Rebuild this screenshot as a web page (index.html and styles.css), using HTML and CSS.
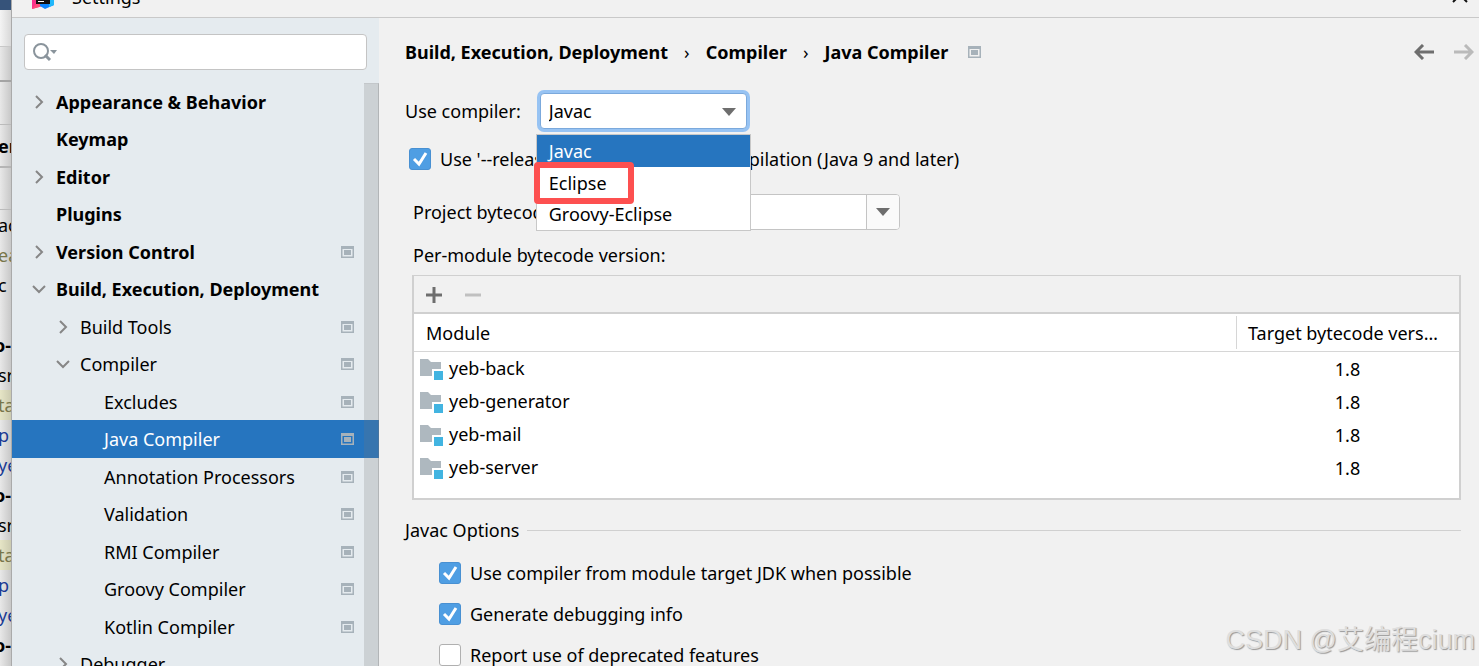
FILE: index.html
```html
<!DOCTYPE html>
<html lang="en">
<head>
    <meta charset="utf-8">
    <title>Settings</title>
    <link rel="stylesheet" href="styles.css">
</head>
<body>

    <!-- shared icons -->
    <svg class="defs" aria-hidden="true">
        <symbol id="right" viewBox="0 0 14 14"><path d="M4 1l6 6-6 6" fill="none" stroke="#868686" stroke-width="2"/></symbol>
        <symbol id="down" viewBox="0 0 14 14"><path d="M1 4l6 6 6-6" fill="none" stroke="#868686" stroke-width="2"/></symbol>
        <symbol id="project" viewBox="0 0 13 12"><path d="M0 0h13v12H0zM1.500 3v7.500h10V3z" fill="#a7b2ba" fill-rule="evenodd"/><path d="M3 4h7v5H3z" fill="#a7b2ba"/></symbol>
        <symbol id="module" viewBox="0 0 24 22"><path d="M0 0h8l3 3h10v7h-9v7H0z" fill="#aeb8bf"/><path d="M14 12h9v9h-9z" fill="#42b4e1"/></symbol>
    </svg>

    <div class="screen">
        <div class="editor" aria-hidden="true">
            <div class="editor-title"></div>
            <div class="editor-menu"></div>
            <div class="editor-bar"></div>
            <div class="editor-tabs"></div>
            <div class="editor-file">er</div>
            <div class="editor-gap"></div>
            <div class="line">ac</div>
            <div class="line note">ea</div>
            <div class="line">c</div>
            <div class="line"></div>
            <div class="line bold">o-</div>
            <div class="line">sr</div>
            <div class="line note marked">ta</div>
            <div class="line blue">p</div>
            <div class="line blue">ye</div>
            <div class="line bold">o-</div>
            <div class="line">sr</div>
            <div class="line note marked">ta</div>
            <div class="line blue">p</div>
            <div class="line blue">ye</div>
            <div class="line bold">o-</div>
        </div>

        <div class="dialog">
            <div class="titlebar">
                <svg class="logo" width="22" height="24" viewBox="0 0 22 24">
                    <path d="M0 0h11v21L0 24z" fill="#fc318c"/>
                    <path d="M0 24l5-7 5 3-3 2z" fill="#ff4b7b"/>
                    <path d="M9 0h13v20l-9 4-5-3z" fill="#0a84ff"/>
                    <path d="M17 10l5-2v12l-5 2z" fill="#21b8fb"/>
                    <path d="M4 3h14v16H4z" fill="#111"/>
                    <path d="M6 16h6v1H6z" fill="#fff"/>
                </svg>
                <span>Settings</span>
                <button class="close" aria-label="Close"><svg width="16" height="16" viewBox="0 0 16 16"><path d="M1 1l14 14M15 1L1 15" stroke="#111" stroke-width="2"/></svg></button>
            </div>

            <div class="content">
                <nav class="sidebar">
                    <div class="search">
                        <svg width="26" height="20" viewBox="0 0 26 20">
                            <circle cx="9" cy="9" r="7" fill="none" stroke="#8a949c" stroke-width="2"/>
                            <path d="M13 13l5 5" stroke="#8a949c" stroke-width="3"/>
                            <path d="M18 8h7l-3 4z" fill="#8a949c"/>
                        </svg>
                        <input type="text" aria-label="Search settings">
                    </div>
                    <div class="tree-box">
                        <ul class="tree">
                            <li><a href="#" class="top"><svg class="arrow"><use href="#right"/></svg>Appearance &amp; Behavior</a></li>
                            <li><a href="#" class="top"><span class="arrow"></span>Keymap</a></li>
                            <li><a href="#" class="top"><svg class="arrow"><use href="#right"/></svg>Editor</a></li>
                            <li><a href="#" class="top"><span class="arrow"></span>Plugins</a></li>
                            <li><a href="#" class="top"><svg class="arrow"><use href="#right"/></svg>Version Control<svg class="mark"><use href="#project"/></svg></a></li>
                            <li><a href="#" class="top"><svg class="arrow"><use href="#down"/></svg>Build, Execution, Deployment</a></li>
                            <li><a href="#" class="second"><svg class="arrow"><use href="#right"/></svg>Build Tools<svg class="mark"><use href="#project"/></svg></a></li>
                            <li><a href="#" class="second"><svg class="arrow"><use href="#down"/></svg>Compiler<svg class="mark"><use href="#project"/></svg></a></li>
                            <li><a href="#" class="third">Excludes<svg class="mark"><use href="#project"/></svg></a></li>
                            <li><a href="#" class="third selected">Java Compiler<svg class="mark"><use href="#project"/></svg></a></li>
                            <li><a href="#" class="third">Annotation Processors<svg class="mark"><use href="#project"/></svg></a></li>
                            <li><a href="#" class="third">Validation<svg class="mark"><use href="#project"/></svg></a></li>
                            <li><a href="#" class="third">RMI Compiler<svg class="mark"><use href="#project"/></svg></a></li>
                            <li><a href="#" class="third">Groovy Compiler<svg class="mark"><use href="#project"/></svg></a></li>
                            <li><a href="#" class="third">Kotlin Compiler<svg class="mark"><use href="#project"/></svg></a></li>
                            <li><a href="#" class="second"><svg class="arrow"><use href="#right"/></svg>Debugger</a></li>
                        </ul>
                        <div class="scrollbar"></div>
                    </div>
                </nav>

                <main class="page">
                    <header class="crumbs">
                        <h1>Build, Execution, Deployment</h1>
                        <span>›</span>
                        <h1>Compiler</h1>
                        <span>›</span>
                        <h1>Java Compiler</h1>
                        <svg class="mark"><use href="#project"/></svg>
                        <div class="history">
                            <button aria-label="Back"><svg width="20" height="16" viewBox="0 0 20 16"><path d="M20 8H2M9 1L2 8l7 7" fill="none" stroke="#6e6e6e" stroke-width="3"/></svg></button>
                            <button aria-label="Forward" disabled><svg width="20" height="16" viewBox="0 0 20 16"><path d="M0 8h18M11 1l7 7-7 7" fill="none" stroke="#bababa" stroke-width="3"/></svg></button>
                        </div>
                    </header>

                    <div class="row compiler">
                        <label for="compiler">Use compiler:</label>
                        <div class="combo">
                            <select id="compiler">
                                <option>Javac</option>
                                <option>Eclipse</option>
                                <option>Groovy-Eclipse</option>
                            </select>
                            <svg class="triangle" width="14" height="8" viewBox="0 0 14 8"><path d="M0 0h14L7 8z" fill="#6e6e6e"/></svg>
                            <ul class="popup">
                                <li class="active">Javac</li>
                                <li class="boxed">Eclipse</li>
                                <li>Groovy-Eclipse</li>
                            </ul>
                        </div>
                    </div>

                    <div class="row release">
                        <input type="checkbox" id="release" checked>
                        <label for="release" class="release-text"><span>Use '--release' option for cross-com</span><span>pilation (Java 9 and later)</span></label>
                    </div>

                    <div class="row project">
                        <label for="version">Project bytecode version:</label>
                        <div class="editable">
                            <input type="text" id="version">
                            <button aria-label="Show versions"><svg width="14" height="8" viewBox="0 0 14 8"><path d="M0 0h14L7 8z" fill="#6e6e6e"/></svg></button>
                        </div>
                    </div>

                    <div class="caption" id="modules">Per-module bytecode version:</div>

                    <div class="panel">
                        <div class="toolbar">
                            <button aria-label="Add"><svg width="16" height="16" viewBox="0 0 16 16"><path d="M8 0v16M0 8h16" stroke="#6e6e6e" stroke-width="3"/></svg></button>
                            <button aria-label="Remove" disabled><svg width="16" height="16" viewBox="0 0 16 16"><path d="M0 8h16" stroke="#c0c0c0" stroke-width="3"/></svg></button>
                        </div>
                        <table aria-labelledby="modules">
                            <thead>
                                <tr><th>Module</th><th class="target"><div>Target bytecode version</div></th></tr>
                            </thead>
                            <tbody>
                                <tr><td><svg class="module"><use href="#module"/></svg>yeb-back</td><td>1.8</td></tr>
                                <tr><td><svg class="module"><use href="#module"/></svg>yeb-generator</td><td>1.8</td></tr>
                                <tr><td><svg class="module"><use href="#module"/></svg>yeb-mail</td><td>1.8</td></tr>
                                <tr><td><svg class="module"><use href="#module"/></svg>yeb-server</td><td>1.8</td></tr>
                            </tbody>
                        </table>
                    </div>

                    <fieldset class="options">
                        <legend>Javac Options</legend>
                        <div class="row"><input type="checkbox" id="jdk" checked><label for="jdk">Use compiler from module target JDK when possible</label></div>
                        <div class="row"><input type="checkbox" id="debug" checked><label for="debug">Generate debugging info</label></div>
                        <div class="row"><input type="checkbox" id="deprecated"><label for="deprecated">Report use of deprecated features</label></div>
                    </fieldset>
                </main>
            </div>
        </div>
    </div>

    <div class="watermark">CSDN @艾编程cium</div>

</body>
</html>
```
FILE: styles.css
```css
*, *::before, *::after
{
    box-sizing: border-box;
}

body
{
    margin: 0;
    height: 100vh;
    overflow: hidden;
    position: relative;
    background: #f1f1f1;
    color: #000;
    font-family: "Noto Sans", "Noto Sans CJK SC", sans-serif;
    font-size: 18px;
    line-height: 24px;
}

button
{
    border: 0;
    padding: 0;
    background: none;
    display: flex;
}

input, select
{
    font: inherit;
    margin: 0;
}

ul
{
    list-style: none;
    margin: 0;
    padding: 0;
}

.defs
{
    display: none;
}

.screen
{
    display: flex;
    height: 100%;
}

/* editor window behind the dialog */
.editor
{
    flex: 0 0 12px;
    overflow: hidden;
    background: linear-gradient(to right, #e8e8e8, #c8c8c8);
    border-right: 1px solid #aaa;
    text-indent: -2px;
}

.editor-title
{
    height: 10px;
    background: #36537a;
}

.editor-menu
{
    height: 37px;
    background: linear-gradient(to right, #f4f4f4, #d8d8d8);
    border-bottom: 1px solid #c8c8c8;
}

.editor-bar
{
    height: 35px;
    border-bottom: 2px solid #a4a4a4;
}

.editor-tabs
{
    height: 43px;
    border-bottom: 1px solid #bbb;
}

.editor-file
{
    height: 43px;
    line-height: 42px;
    font-weight: bold;
    border-bottom: 2px solid #b5b5b5;
}

.editor-gap
{
    height: 42px;
    border-bottom: 1px solid #bbb;
}

.line
{
    height: 30px;
    line-height: 30px;
}

.note
{
    color: #77754a;
}

.marked
{
    background: linear-gradient(to right, #e6e5c6, #cccbb0);
}

.blue
{
    color: #1a3a94;
}

.bold
{
    font-weight: bold;
    text-indent: -6px;
}

.dialog
{
    flex: 1;
    min-width: 0;
    display: flex;
    flex-direction: column;
}

.titlebar
{
    height: 18px;
    flex: none;
    display: flex;
    align-items: flex-end;
    gap: 18px;
    padding: 0 11px 8px 20px;
    overflow: hidden;
    border-bottom: 1px solid #c9c9c9;
}

.close
{
    margin-left: auto;
    padding-bottom: 6px;
}

.content
{
    flex: 1;
    min-height: 0;
    display: flex;
}

/* left side */
.sidebar
{
    flex: 0 0 367px;
    background: #e5ebef;
    overflow: hidden;
}

.search
{
    display: flex;
    align-items: center;
    height: 36px;
    margin: 16px 12px 13px;
    padding-left: 7px;
    background: #fff;
    border: 1px solid #c4c4c4;
    border-radius: 4px;
}

.search input
{
    flex: 1;
    min-width: 0;
    border: 0;
    outline: 0;
    background: none;
}

.tree-box
{
    position: relative;
}

.tree li
{
    height: 37px;
}

.tree li:nth-child(even)
{
    height: 38px;
}

.tree a
{
    display: flex;
    align-items: center;
    height: 100%;
    padding-right: 25px;
    color: #000;
    text-decoration: none;
}

.tree .top
{
    padding-left: 20px;
    font-weight: bold;
}

.tree .second
{
    padding-left: 44px;
}

.tree .third
{
    padding-left: 92px;
}

.tree .selected
{
    background: #2675bf;
    color: #fff;
}

.arrow
{
    width: 14px;
    height: 14px;
    margin-right: 10px;
}

.mark
{
    width: 13px;
    height: 12px;
}

.tree .mark
{
    margin-left: auto;
}

.scrollbar
{
    position: absolute;
    top: 0;
    right: 0;
    bottom: 0;
    width: 15px;
    background: rgba(120, 120, 120, .22);
    border-top: 1px solid rgba(120, 120, 120, .1);
    border-right: 1px solid rgba(120, 120, 120, .3);
}

/* right side */
.page
{
    flex: 1;
    min-width: 0;
    padding: 18px 18px 0 26px;
}

.crumbs
{
    display: flex;
    align-items: center;
    gap: 16px;
    height: 32px;
    margin-right: -13px;
}

.crumbs h1
{
    margin: 0;
    font-size: 18px;
}

.crumbs .mark
{
    margin-left: 4px;
}

.history
{
    display: flex;
    gap: 20px;
    margin-left: auto;
}

.row
{
    display: flex;
    align-items: center;
}

.compiler
{
    height: 36px;
    margin-top: 25px;
    gap: 19px;
}

.combo
{
    position: relative;
}

.combo select
{
    display: block;
    width: 207px;
    height: 36px;
    padding: 0 8px;
    appearance: none;
    background: #fff;
    color: #000;
    border: 1px solid #7ba9dc;
    border-radius: 4px;
    outline: 0;
    box-shadow: 0 0 0 3px #97c3f3;
}

.triangle
{
    position: absolute;
    right: 11px;
    top: 15px;
    pointer-events: none;
}

.popup
{
    position: absolute;
    z-index: 1;
    top: 41px;
    left: -4px;
    width: 215px;
    background: #fff;
    border: 1px solid #c8c8c8;
}

.popup li
{
    height: 32px;
    padding: 4px 12px;
}

.popup li:last-child
{
    height: 31px;
    padding-top: 3px;
}

.popup .active
{
    background: #2675bf;
    color: #fff;
}

.popup .boxed
{
    position: relative;
}

/* red frame round the option */
.boxed::after
{
    content: "";
    position: absolute;
    top: -5px;
    left: -3px;
    width: 100px;
    height: 42px;
    border: 6px solid #fd5050;
    border-radius: 4px;
}

input[type="checkbox"]
{
    flex: none;
    width: 22px;
    height: 22px;
    appearance: none;
    background: #fff;
    border: 1px solid #b0b0b0;
    border-radius: 3px;
}

input[type="checkbox"]:checked
{
    background: #4f9ee3 url("data:image/svg+xml,%3Csvg xmlns='http://www.w3.org/2000/svg' viewBox='0 0 20 20'%3E%3Cpath d='M4 10l5 5 7-11' fill='none' stroke='white' stroke-width='3'/%3E%3C/svg%3E");
    border-color: #4890d2;
}

.release
{
    height: 36px;
    margin-top: 12px;
    padding-left: 4px;
    gap: 9px;
}

.release-text
{
    display: flex;
    gap: 12px;
}

.project
{
    height: 36px;
    margin-top: 17px;
    padding-left: 8px;
    gap: 18px;
}

.editable
{
    display: flex;
    width: 257px;
    height: 36px;
    background: #fff;
    border: 1px solid #c4c4c4;
    border-radius: 4px;
    overflow: hidden;
}

.editable input
{
    flex: 1;
    min-width: 0;
    border: 0;
}

.editable button
{
    width: 33px;
    align-items: center;
    justify-content: center;
    background: #fafafa;
    border-left: 1px solid #c4c4c4;
}

.caption
{
    margin: 13px 0 8px 8px;
}

.panel
{
    height: 225px;
    margin-left: 7px;
    background: #fff;
    border: 2px solid #d0d0d0;
    border-top-width: 1px;
}

.toolbar
{
    display: flex;
    align-items: center;
    gap: 23px;
    height: 38px;
    padding: 2px 0 0 12px;
    background: #f1f1f1;
    border-bottom: 2px solid #d0d0d0;
}

table
{
    width: 100%;
    table-layout: fixed;
    border-collapse: collapse;
}

th
{
    height: 37px;
    padding: 2px 12px 0;
    font-weight: normal;
    text-align: left;
    border-bottom: 1px solid #d6d6d6;
}

.target
{
    width: 223px;
    padding: 0;
}

.target div
{
    padding: 5px 19px 4px 11px;
    border-left: 1px solid #d6d6d6;
    overflow: hidden;
    white-space: nowrap;
    text-overflow: ellipsis;
}

tbody::before
{
    content: "";
    display: table-row;
    height: 1px;
}

td
{
    height: 33px;
    padding: 0 6px;
}

td:last-child
{
    text-align: center;
}

.module
{
    width: 24px;
    height: 22px;
    margin-right: 5px;
    vertical-align: middle;
}

.options
{
    margin: 18px 0 0;
    padding: 0;
    border: 0;
}

.options legend
{
    display: flex;
    align-items: center;
    gap: 8px;
    width: 100%;
    padding: 0;
}

.options legend::after
{
    content: "";
    flex: 1;
    height: 1px;
    background: #d0d0d0;
}

.options .row
{
    height: 24px;
    margin: 17px 0 0 34px;
    gap: 9px;
}

.options legend + .row
{
    margin-top: 19px;
}

.watermark
{
    position: absolute;
    right: 4px;
    bottom: 6px;
    color: #dedede;
    font: 27px/40px "Liberation Sans", "Noto Sans CJK SC", sans-serif;
    text-shadow: 1px 1px 1px #999;
}
```
